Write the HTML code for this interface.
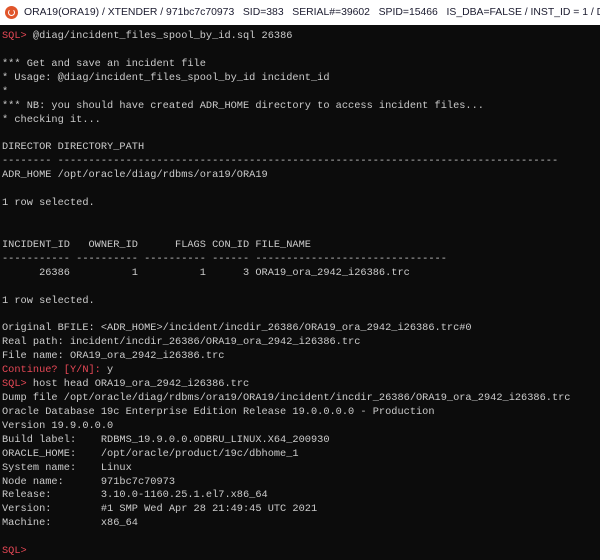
<!DOCTYPE html>
<html><head><meta charset="utf-8"><style>
html,body{margin:0;padding:0;width:600px;height:560px;overflow:hidden;background:#0c0c0c}
#tb{position:absolute;left:0;top:0;width:600px;height:25px;overflow:hidden;background:#fff;font-family:"Liberation Sans",sans-serif;font-size:10.4px;color:#1a1a2e;white-space:pre;line-height:25px}
#ic{position:absolute;left:5px;top:6px;width:13px;height:13px;border-radius:50%;background:#e0552b}
#ic:after{content:"";position:absolute;left:3px;top:3px;width:5px;height:5px;border:1.5px solid #fff;border-top-color:transparent;border-radius:50%}
#tt{position:absolute;left:24px;top:0}
pre{position:absolute;left:2px;top:30px;margin:0;font-family:"Liberation Mono",monospace;font-size:10.3px;line-height:13.92px;color:#cccccc}
.r{color:#e74856}
</style></head><body>
<div id="tb"><div id="ic"></div><div id="tt">ORA19(ORA19) / XTENDER / 971bc7c70973   SID=383   SERIAL#=39602   SPID=15466   IS_DBA=FALSE / INST_ID = 1 / DB_NAME</div></div>
<pre><span class="r">SQL&gt; </span>@diag/incident_files_spool_by_id.sql 26386

*** Get and save an incident file
* Usage: @diag/incident_files_spool_by_id incident_id
*
*** NB: you should have created ADR_HOME directory to access incident files...
* checking it...

DIRECTOR DIRECTORY_PATH
-------- ---------------------------------------------------------------------------------
ADR_HOME /opt/oracle/diag/rdbms/ora19/ORA19

1 row selected.


INCIDENT_ID   OWNER_ID      FLAGS CON_ID FILE_NAME
----------- ---------- ---------- ------ -------------------------------
      26386          1          1      3 ORA19_ora_2942_i26386.trc

1 row selected.

Original BFILE: &lt;ADR_HOME&gt;/incident/incdir_26386/ORA19_ora_2942_i26386.trc#0
Real path: incident/incdir_26386/ORA19_ora_2942_i26386.trc
File name: ORA19_ora_2942_i26386.trc
<span class="r">Continue? [Y/N]: </span>y
<span class="r">SQL&gt; </span>host head ORA19_ora_2942_i26386.trc
Dump file /opt/oracle/diag/rdbms/ora19/ORA19/incident/incdir_26386/ORA19_ora_2942_i26386.trc
Oracle Database 19c Enterprise Edition Release 19.0.0.0.0 - Production
Version 19.9.0.0.0
Build label:    RDBMS_19.9.0.0.0DBRU_LINUX.X64_200930
ORACLE_HOME:    /opt/oracle/product/19c/dbhome_1
System name:    Linux
Node name:      971bc7c70973
Release:        3.10.0-1160.25.1.el7.x86_64
Version:        #1 SMP Wed Apr 28 21:49:45 UTC 2021
Machine:        x86_64

<span class="r">SQL&gt; </span></pre>
</body></html>
